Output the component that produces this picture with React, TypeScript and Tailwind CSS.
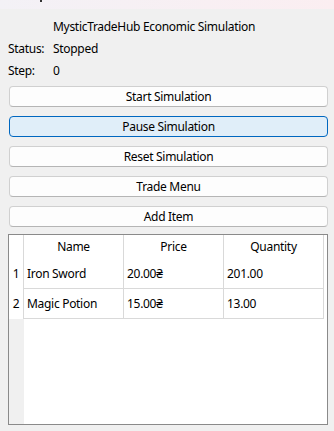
import React from "react";

const font = { fontFamily: '"Noto Sans", "Open Sans", Arial, sans-serif' };

function Btn({ label, active }: { label: string; active?: boolean }) {
  return (
    <div
      className={
        "h-[21px] w-[319px] rounded-[4px] border flex items-center justify-center text-[12px] text-black leading-none " +
        (active
          ? "bg-[#e0eef9] border-[#0067c0]"
          : "bg-[#fdfdfd] border-[#d0d0d0] border-b-[#b5b5b5]")
      }
    >
      {label}
    </div>
  );
}

const rows = [
  { n: "1", name: "Iron Sword", price: "20.00₴", qty: "201.00" },
  { n: "2", name: "Magic Potion", price: "15.00₴", qty: "13.00" },
];

export default function App() {
  return (
    <div className="w-[334px] h-[431px] flex flex-col bg-[#f0f0f0] overflow-hidden tracking-[-0.3px]" style={font}>
      <div className="h-[9px] bg-gradient-to-r from-[#f3f1f6] to-[#fbeef1] pl-[40px]">
        <div className="w-[2px] h-[2px] bg-[#333]" />
      </div>
      <div className="flex flex-col pt-[6px] text-[12px] text-black">
        <div className="h-[23px] flex items-center pl-[53px]">MysticTradeHub Economic Simulation</div>
        <div className="h-[22px] flex items-center pl-[8px]">
          <span className="w-[45px]">Status:</span>
          <span>Stopped</span>
        </div>
        <div className="h-[22px] flex items-center pl-[8px]">
          <span className="w-[45px]">Step:</span>
          <span>0</span>
        </div>
        <div className="flex flex-col gap-[9px] pl-[9px] mt-[4px]">
          <Btn label="Start Simulation" />
          <Btn label="Pause Simulation" active />
          <Btn label="Reset Simulation" />
          <Btn label="Trade Menu" />
          <Btn label="Add Item" />
        </div>
        <div className="ml-[8px] mt-[7px] w-[320px] h-[191px] border border-[#8a8a8a] bg-white flex flex-col">
          <div className="h-[24px] flex">
            <div className="w-[15px] border-r border-[#d9d9d9]" />
            <div className="w-[100px] border-r border-[#d9d9d9] flex items-center justify-center">Name</div>
            <div className="w-[100px] border-r border-[#d9d9d9] flex items-center justify-center">Price</div>
            <div className="w-[100px] border-r border-[#d9d9d9] flex items-center justify-center">Quantity</div>
          </div>
          {rows.map((r) => (
            <div key={r.n} className="h-[30px] flex">
              <div className="w-[15px] border-r border-[#d9d9d9] flex items-center justify-center">{r.n}</div>
              <div className="w-[100px] border-r border-b border-[#d9d9d9] flex items-center pl-[3px]">{r.name}</div>
              <div className="w-[100px] border-r border-b border-[#d9d9d9] flex items-center pl-[3px]">{r.price}</div>
              <div className="w-[100px] border-r border-b border-[#d9d9d9] flex items-center pl-[3px]">{r.qty}</div>
            </div>
          ))}
          <div className="flex-1 flex">
            <div className="w-[15px] bg-[#f0f0f0]" />
            <div className="flex-1" />
          </div>
        </div>
      </div>
    </div>
  );
}
